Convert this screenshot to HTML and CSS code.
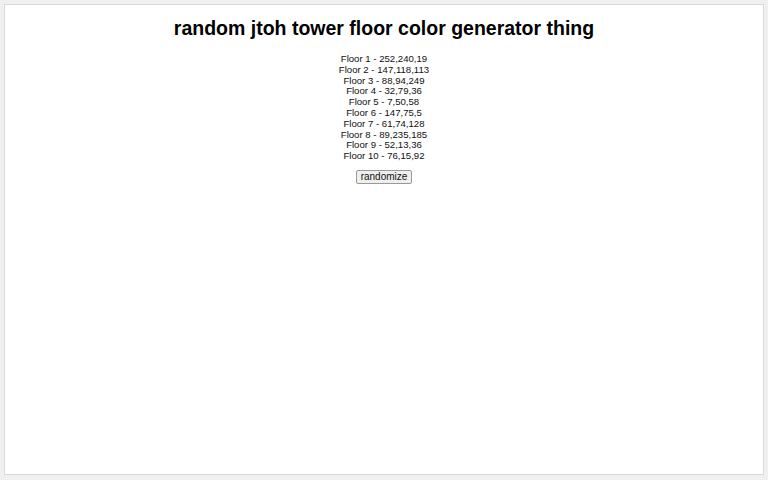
FILE: index.html
```html
<!doctype html>
<html lang="en">
<head>
    <meta charset="UTF-8">
    <title>random jtoh tower floor color generator thing</title>
    <link rel="stylesheet" href="styles.css">
</head>
<body>

<div class="page">
    <h1 class="title">random jtoh tower floor color generator thing</h1>
    <div class="floors" id="floors">
        <p>Floor 1 - 252,240,19</p>
        <p>Floor 2 - 147,118,113</p>
        <p>Floor 3 - 88,94,249</p>
        <p>Floor 4 - 32,79,36</p>
        <p>Floor 5 - 7,50,58</p>
        <p>Floor 6 - 147,75,5</p>
        <p>Floor 7 - 61,74,128</p>
        <p>Floor 8 - 89,235,185</p>
        <p>Floor 9 - 52,13,36</p>
        <p>Floor 10 - 76,15,92</p>
    </div>
    <button class="btn" type="button">randomize</button>
</div>

</body>
</html>
```

FILE: styles.css
```css
*{margin:0;padding:0;}
html,body{height:100%;}
body{
    background:#f0f0f0;
    padding:4px 4px 5px 4px;
    box-sizing:border-box;
    font-family:"Liberation Sans",Arial,sans-serif;
}
.page{
    height:100%;
    box-sizing:border-box;
    background:#fff;
    border:1px solid #d8d8d8;
    text-align:center;
    padding-top:12px;
}
.title{
    font-size:19.5px;
    font-weight:bold;
    color:#000;
    line-height:23px;
    margin-bottom:14px;
}
.floors p{
    font-size:9.6px;
    line-height:10.8px;
    color:#111;
}
.btn{
    margin-top:8px;
    font-family:"Liberation Sans",Arial,sans-serif;
    font-size:10px;
    line-height:12px;
    padding:0 4px;
    background:#efefef;
    border:1px solid #999;
    border-radius:2px;
    color:#111;
}
```
